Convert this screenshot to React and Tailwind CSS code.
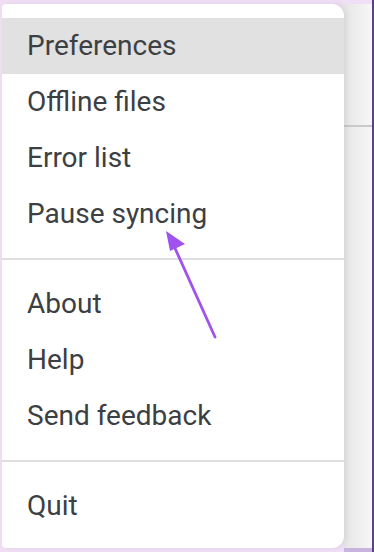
import React from 'react';

const groups = [
  ['Preferences', 'Offline files', 'Error list', 'Pause syncing'],
  ['About', 'Help', 'Send feedback'],
  ['Quit'],
];

const MenuItem = ({ label, active }) => (
  <div
    className={`h-[56px] flex items-center pl-[25px] text-[28px] leading-none text-[#3c4043] ${active ? 'bg-[#e1e1e1]' : ''}`}
  >
    {label}
  </div>
);

// purple annotation arrow pointing at "Pause syncing"
const Arrow = () => (
  <svg className="absolute left-[150px] top-[218px]" width="80" height="120" viewBox="0 0 80 120">
    <path d="M63 115 L22 24" stroke="#a052ee" strokeWidth="2.8" strokeLinecap="round" fill="none" />
    <path d="M14 9 L33 22 L18 29 Z" fill="#a052ee" />
  </svg>
);

export default function App() {
  return (
    <div
      className="w-[374px] h-[552px] bg-[#f1dff5] flex overflow-hidden"
      style={{ fontFamily: 'Roboto, "Noto Sans", sans-serif' }}
    >
      <div className="flex-1 pt-[4px] pl-[2px] pb-[4px]">
        <div className="relative h-full bg-white rounded-r-[12px] rounded-l-[4px] py-[14px] shadow-[2px_0_6px_rgba(0,0,0,0.08)]">
          {groups.map((g, gi) => (
            <div key={gi}>
              {gi > 0 && <div className="h-[34px] flex items-center"><div className="w-full h-[2px] bg-[#dedede]" /></div>}
              {g.map((label) => (
                <MenuItem key={label} label={label} active={label === 'Preferences'} />
              ))}
            </div>
          ))}
          <Arrow />
        </div>
      </div>
      <div className="w-[28px] h-full bg-gradient-to-r from-[#e6e6e6] to-[#f7f7f7] flex flex-col">
        <div className="h-[4px] bg-[#f1dff5]" />
        <div className="h-[121px]" />
        <div className="h-[2px] bg-[#c9c9c9]" />
        <div className="flex-1" />
        <div className="h-[4px] bg-[#c9b4e0]" />
      </div>
      <div className="w-[2px] h-full bg-[#5b3f88]" />
    </div>
  );
}
